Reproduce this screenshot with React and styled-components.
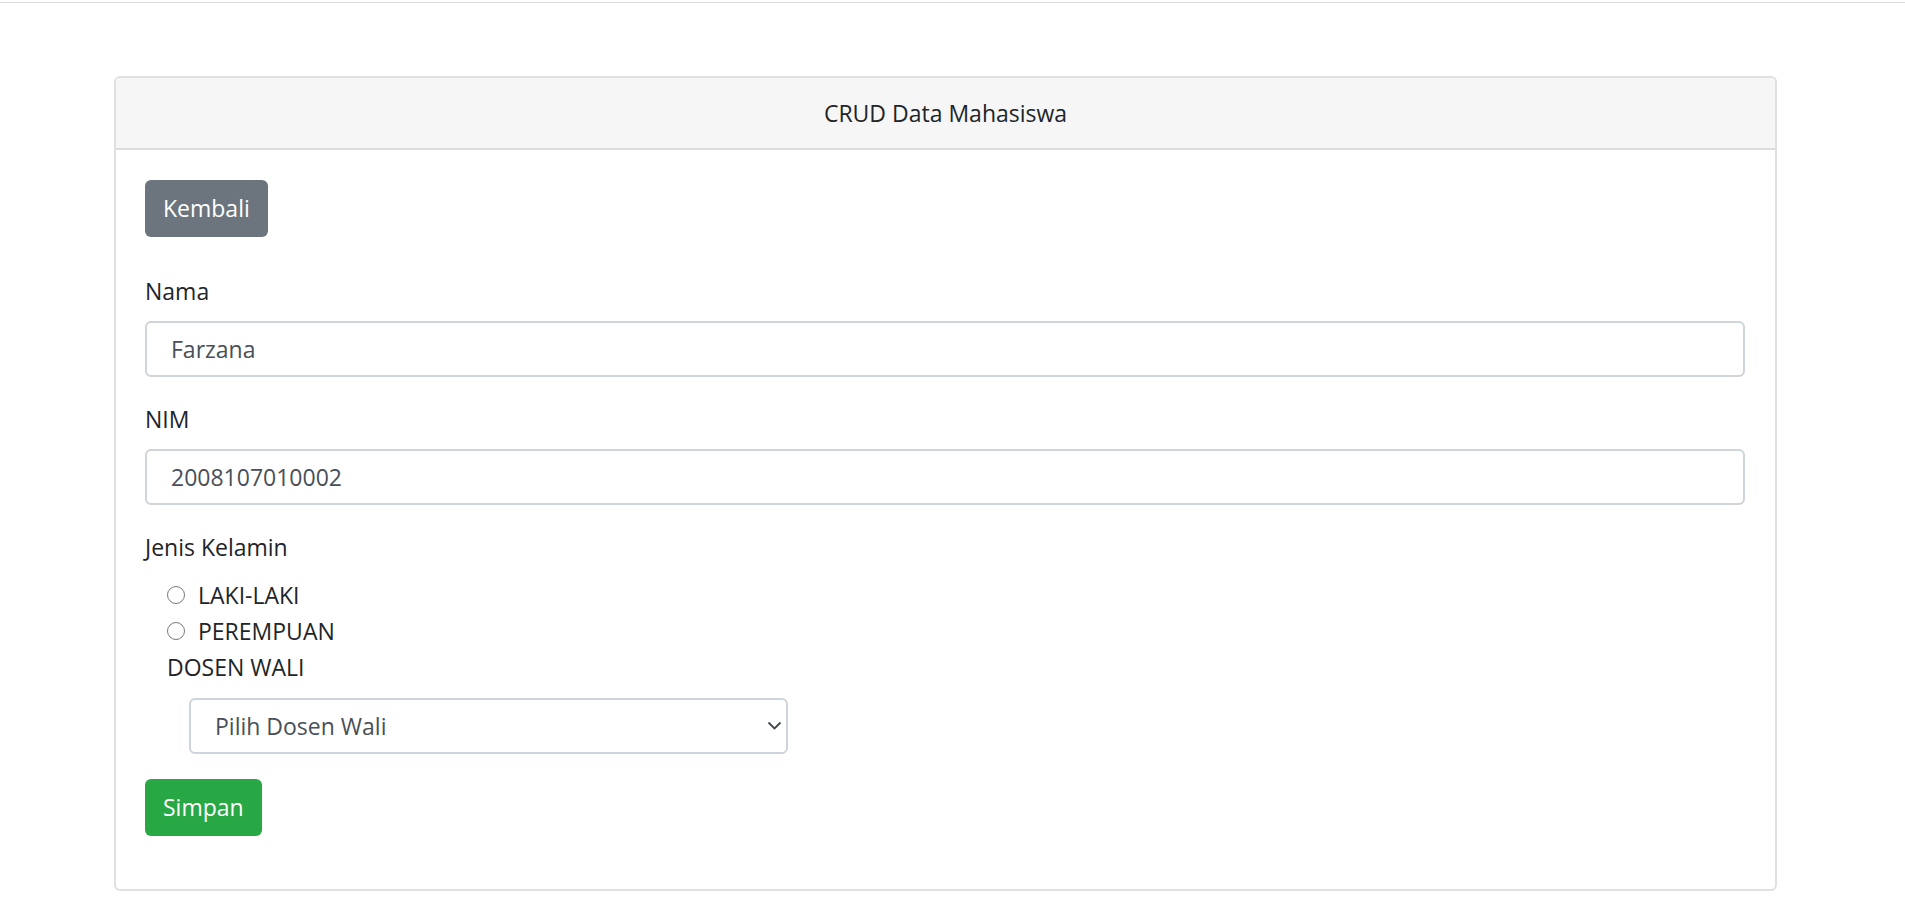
import React from "react";
import styled, { createGlobalStyle } from "styled-components";

const GlobalStyle = createGlobalStyle`
  body {
    margin: 0;
    background: #ffffff;
    color: #212529;
    font-family: "Open Sans", "Noto Sans", sans-serif;
    font-size: 24px;
    line-height: 36px;
  }
`;

export default function App() {
  return (
    <>
      <GlobalStyle />
      <TopRule />
      <Page>
        <Card>
          <CardHeader>CRUD Data Mahasiswa</CardHeader>
          <CardBody>
            <Button variant="secondary">Kembali</Button>
            <Spacer />
            <FormGroup>
              <Label>Nama</Label>
              <Input defaultValue="Farzana" />
            </FormGroup>
            <FormGroup>
              <Label>NIM</Label>
              <Input defaultValue="2008107010002" />
            </FormGroup>
            <Label>Jenis Kelamin</Label>
            <Options>
              <RadioRow>
                <Radio type="radio" name="jk" />
                LAKI-LAKI
              </RadioRow>
              <RadioRow>
                <Radio type="radio" name="jk" />
                PEREMPUAN
              </RadioRow>
              <SubLabel>DOSEN WALI</SubLabel>
              <SelectWrap>
                <Select defaultValue="">
                  <option value="">Pilih Dosen Wali</option>
                </Select>
                <Chevron width="15" height="9" viewBox="0 0 15 9">
                  <path
                    d="M1.5 1.5 L7.5 7.5 L13.5 1.5"
                    fill="none"
                    stroke="#43484d"
                    strokeWidth="1.8"
                  />
                </Chevron>
              </SelectWrap>
            </Options>
            <FormGroup>
              <Button variant="success">Simpan</Button>
            </FormGroup>
          </CardBody>
        </Card>
      </Page>
    </>
  );
}

const TopRule = styled.div`
  height: 2px;
  border-bottom: 1px solid #dcdcdc;
`;

const Page = styled.div`
  padding-left: 114px;
  padding-top: 73px;
`;

const Card = styled.div`
  width: 1663px;
  box-sizing: border-box;
  border: 2px solid #e0e0e0;
  border-radius: 6px;
  overflow: hidden;
`;

const CardHeader = styled.div`
  background: #f6f6f6;
  border-bottom: 2px solid #dcdcdc;
  padding: 17px 30px;
  text-align: center;
  font-size: 23px;
`;

const CardBody = styled.div`
  padding: 30px 30px 29px 29px;
`;

const Button = styled.button`
  display: block;
  font-family: inherit;
  font-size: 23px;
  line-height: 36px;
  padding: 10px 18px 11px;
  border: none;
  border-radius: 6px;
  color: #ffffff;
  background: ${(p) => (p.variant === "success" ? "#28a745" : "#6c757d")};
`;

const Spacer = styled.div`
  height: 36px;
`;

const FormGroup = styled.div`
  margin-bottom: 24px;
`;

const Label = styled.div`
  margin-bottom: 12px;
  font-size: 23px;
`;

const Input = styled.input`
  display: block;
  width: 100%;
  box-sizing: border-box;
  height: 56px;
  padding: 0 24px;
  font-family: inherit;
  font-size: 23px;
  color: #495057;
  border: 2px solid #ced4da;
  border-radius: 6px;
  outline: none;
`;

const Options = styled.div`
  padding-left: 22px;
  margin-bottom: 25px;
`;

const RadioRow = styled.label`
  display: flex;
  align-items: center;
  height: 36px;
  font-size: 23px;
`;

const Radio = styled.input`
  appearance: none;
  box-sizing: border-box;
  width: 18px;
  height: 18px;
  margin: 0 13px 0 0;
  border: 1.5px solid #7a7a7a;
  border-radius: 50%;
  background: #ffffff;
`;

const SubLabel = styled.div`
  font-size: 23px;
  margin-bottom: 13px;
`;

const SelectWrap = styled.div`
  position: relative;
  width: 599px;
  margin-left: 22px;
`;

const Select = styled.select`
  display: block;
  width: 100%;
  height: 56px;
  box-sizing: border-box;
  appearance: none;
  padding: 0 24px;
  font-family: inherit;
  font-size: 23px;
  color: #495057;
  background: #ffffff;
  border: 2px solid #ced4da;
  border-radius: 6px;
  outline: none;
`;

const Chevron = styled.svg`
  position: absolute;
  right: 6px;
  top: 23px;
  pointer-events: none;
`;
